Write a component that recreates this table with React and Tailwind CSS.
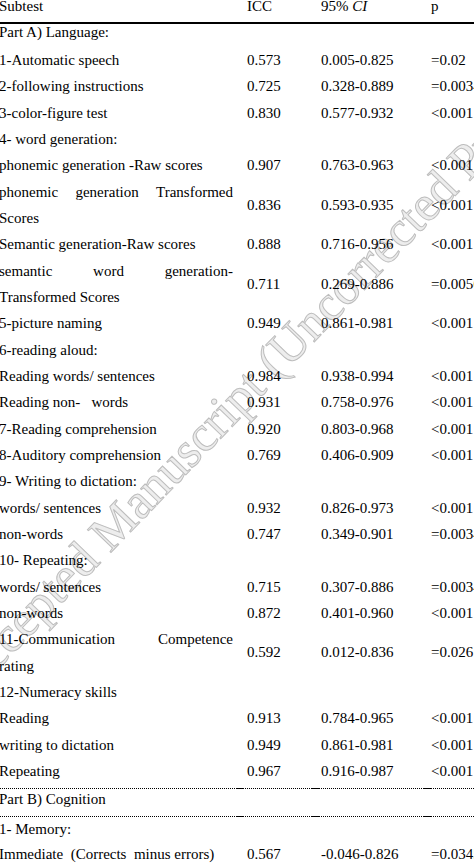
import React from "react";

const rows = [
  { label: "1-Automatic speech", icc: "0.573", ci: "0.005-0.825", p: "=0.02" },
  { label: "2-following instructions", icc: "0.725", ci: "0.328-0.889", p: "=0.0034" },
  { label: "3-color-figure test", icc: "0.830", ci: "0.577-0.932", p: "<0.001" },
  { label: "4- word generation:" },
  { label: "phonemic generation -Raw scores", icc: "0.907", ci: "0.763-0.963", p: "<0.001" },
  { first: ["phonemic", "generation", "Transformed"], second: "Scores", icc: "0.836", ci: "0.593-0.935", p: "<0.001" },
  { label: "Semantic generation-Raw scores", icc: "0.888", ci: "0.716-0.956", p: "<0.001" },
  { first: ["semantic", "word", "generation-"], second: "Transformed Scores", icc: "0.711", ci: "0.269-0.886", p: "=0.0056" },
  { label: "5-picture naming", icc: "0.949", ci: "0.861-0.981", p: "<0.001" },
  { label: "6-reading aloud:" },
  { label: "Reading words/ sentences", icc: "0.984", ci: "0.938-0.994", p: "<0.001" },
  { label: "Reading non-   words", icc: "0.931", ci: "0.758-0.976", p: "<0.001" },
  { label: "7-Reading comprehension", icc: "0.920", ci: "0.803-0.968", p: "<0.001" },
  { label: "8-Auditory comprehension", icc: "0.769", ci: "0.406-0.909", p: "<0.001" },
  { label: "9- Writing to dictation:" },
  { label: "words/ sentences", icc: "0.932", ci: "0.826-0.973", p: "<0.001" },
  { label: "non-words", icc: "0.747", ci: "0.349-0.901", p: "=0.0034" },
  { label: "10- Repeating:" },
  { label: "words/ sentences", icc: "0.715", ci: "0.307-0.886", p: "=0.0034" },
  { label: "non-words", icc: "0.872", ci: "0.401-0.960", p: "<0.001" },
  { first: ["11-Communication", "Competence"], second: "rating", icc: "0.592", ci: "0.012-0.836", p: "=0.026" },
  { label: "12-Numeracy skills" },
  { label: "Reading", icc: "0.913", ci: "0.784-0.965", p: "<0.001" },
  { label: "writing to dictation", icc: "0.949", ci: "0.861-0.981", p: "<0.001" },
  { label: "Repeating", icc: "0.967", ci: "0.916-0.987", p: "<0.001" },
];

const Row = ({ row, className = "" }) => (
  <div className={`grid grid-cols-[248px_75px_112px_1fr] w-[500px] -ml-[8px] items-center ${className}`}>
    <div className="pl-[7px] pr-[7px] whitespace-pre">
      {row.first ? (
        <>
          <div className="flex justify-between">
            {row.first.map((w) => (
              <span key={w}>{w}</span>
            ))}
          </div>
          <div>{row.second}</div>
        </>
      ) : (
        row.label
      )}
    </div>
    <div className="pl-[7px]">{row.icc}</div>
    <div className="pl-[6px]">{row.ci}</div>
    <div className="pl-[4px] whitespace-nowrap">{row.p}</div>
  </div>
);

// dotted rule with the little solid ticks where the cells meet
const DottedRule = () => (
  <div className="flex w-[500px] -ml-[8px]">
    <div className="w-[245px] border-t border-dotted border-black" />
    <div className="w-[6px] border-t border-black" />
    <div className="w-[69px] border-t border-dotted border-black" />
    <div className="w-[6px] border-t border-black" />
    <div className="w-[106px] border-t border-dotted border-black" />
    <div className="w-[6px] border-t border-black" />
    <div className="flex-1 border-t border-dotted border-black" />
  </div>
);

const App = () => {
  return (
    <div className="relative w-[474px] h-[863px] overflow-hidden bg-white text-black text-[15px] font-['Liberation_Serif','Times_New_Roman',serif]">
      {/* watermark */}
      <div className="absolute left-[-60px] top-[669px] origin-top-left rotate-[-46deg] whitespace-nowrap text-[50px] leading-none text-[#ededed] [-webkit-text-stroke:1px_#bdbdbd]">
        Accepted Manuscript (Uncorrected Proof)
      </div>

      <div className="relative -mt-[7px]">
        <div className="grid grid-cols-[248px_75px_112px_1fr] w-[500px] -ml-[8px] leading-[26px] pb-[3px] border-b-2 border-black">
          <div className="pl-[7px]">Subtest</div>
          <div className="pl-[7px]">ICC</div>
          <div className="pl-[6px]">
            95% <i>CI</i>
          </div>
          <div className="pl-[4px]">p</div>
        </div>

        <div className="leading-[16px] pb-[7px] -ml-[1px]">Part A) Language:</div>

        <div className="leading-[26.33px]">
          {rows.map((row, i) => (
            <Row key={i} row={row} />
          ))}
        </div>

        <div className="h-[4px]" />
        <DottedRule />
        <div className="leading-[21px] pb-[6px] -ml-[1px]">Part B) Cognition</div>
        <DottedRule />
        <div className="leading-[24px] -ml-[1px]">1- Memory:</div>
        <Row
          className="leading-[26.33px]"
          row={{ label: "Immediate  (Corrects  minus errors)", icc: "0.567", ci: "-0.046-0.826", p: "=0.0345" }}
        />
      </div>
    </div>
  );
};

export default App;
